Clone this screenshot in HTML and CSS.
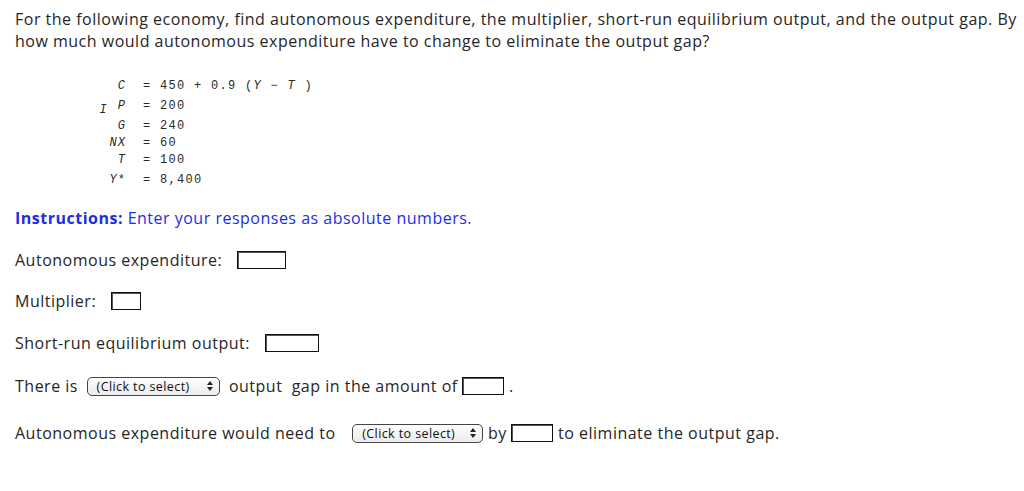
FILE: index.html
```html
<!DOCTYPE html>
<html>
<head>
<meta charset="utf-8">
<link rel="stylesheet" href="styles.css">
</head>
<body>
<div class="page">
  <p class="question">For the following economy, find autonomous expenditure, the multiplier, short-run equilibrium output, and the output gap. By how much would autonomous expenditure have to change to eliminate the output gap?</p>

  <div class="eqs">
    <div class="eq"><span class="lbl"><i>C</i></span><span class="op">=</span><span class="val">450 + 0.9 (<i>Y</i> &minus; <i>T</i> )</span></div>
    <div class="eq gap"><span class="lbl"><i class="low">I</i> <i>P</i></span><span class="op">=</span><span class="val">200</span></div>
    <div class="eq gap"><span class="lbl"><i>G</i></span><span class="op">=</span><span class="val">240</span></div>
    <div class="eq"><span class="lbl"><i>NX</i></span><span class="op">=</span><span class="val">60</span></div>
    <div class="eq"><span class="lbl"><i>T</i></span><span class="op">=</span><span class="val">100</span></div>
    <div class="eq gap"><span class="lbl"><i>Y</i>*</span><span class="op">=</span><span class="val">8,400</span></div>
  </div>

  <p class="instructions"><b>Instructions:</b> Enter your responses as absolute numbers.</p>

  <div class="row r-auto">Autonomous expenditure: <span class="box w49 ml14"></span></div>
  <div class="row r-mult">Multiplier: <span class="box w30 ml14"></span></div>
  <div class="row r-short">Short-run equilibrium output: <span class="box w54 ml14"></span></div>
  <div class="row r-gap">There is <span class="select w133 ml4"><span class="sel-text">(Click to select)</span><svg class="arrows" width="6" height="10" viewBox="0 0 6 10"><path d="M0 4 L3 0 L6 4 Z M0 6 L3 10 L6 6 Z" fill="#222"/></svg></span>  output&nbsp; gap in the amount of <span class="box w42"></span> .</div>
  <div class="row r-last">Autonomous expenditure would need to <span class="select w131 ml10"><span class="sel-text">(Click to select)</span><svg class="arrows" width="6" height="10" viewBox="0 0 6 10"><path d="M0 4 L3 0 L6 4 Z M0 6 L3 10 L6 6 Z" fill="#222"/></svg></span> by <span class="box w42"></span> to eliminate the output gap.</div>
</div>
</body>
</html>
```
FILE: styles.css
```css
html, body {
  margin: 0;
  padding: 0;
  background: #fff;
}
.page {
  padding: 8px 0 0 15px;
  font-family: "Open Sans", Arial, sans-serif;
  font-size: 16px;
  letter-spacing: 0.5px;
  color: #262626;
}
.question {
  margin: 0;
  line-height: 22px;
}
.eqs {
  margin-top: 26px;
  font-family: "Liberation Mono", "Courier New", monospace;
  font-size: 12px;
  letter-spacing: 0;
  color: #2a2a2a;
}
.eq {
  display: flex;
  align-items: baseline;
  line-height: 17px;
}
.eq.gap { margin-top: 3px; }
.lbl {
  width: 111px;
  text-align: right;
  letter-spacing: 1px;
}
.lbl i { font-style: italic; }
.low { vertical-align: -4px; margin-right: 2px; line-height: 0; }
.op { margin-left: 17px; width: 17px; }
.val { letter-spacing: 1.3px; }
.instructions {
  margin: 18px 0 0 0;
  color: #1a2ee8;
  line-height: 22px;
}
.instructions b { font-weight: bold; }
.row {
  display: flex;
  align-items: center;
  line-height: 22px;
  white-space: pre;
}
.r-auto { margin-top: 20px; }
.r-mult { margin-top: 19px; }
.r-short { margin-top: 20px; }
.r-gap { margin-top: 21px; }
.r-last { margin-top: 25px; }
.box {
  display: inline-block;
  height: 18px;
  box-sizing: border-box;
  border: 1px solid #111;
  box-shadow: inset 1px 1px 0 #555;
  background: #fff;
}
.w49 { width: 49px; }
.w30 { width: 30px; }
.w54 { width: 54px; }
.w42 { width: 42px; }
.ml14 { margin-left: 10px; }
.ml4 { margin-left: 4px; }
.ml10 { margin-left: 12px; }
.select {
  display: inline-flex;
  align-items: center;
  justify-content: space-between;
  height: 19px;
  box-sizing: border-box;
  border: 1px solid #444;
  border-radius: 5px;
  background: linear-gradient(#fdfdfd, #ececec);
  padding: 0 6px 0 9px;
  font-size: 12.5px;
  letter-spacing: 0.4px;
  color: #111;
}
.w133 { width: 133px; }
.w131 { width: 131px; }
.sel-text { line-height: 17px; }
.arrows { display: block; }
```
